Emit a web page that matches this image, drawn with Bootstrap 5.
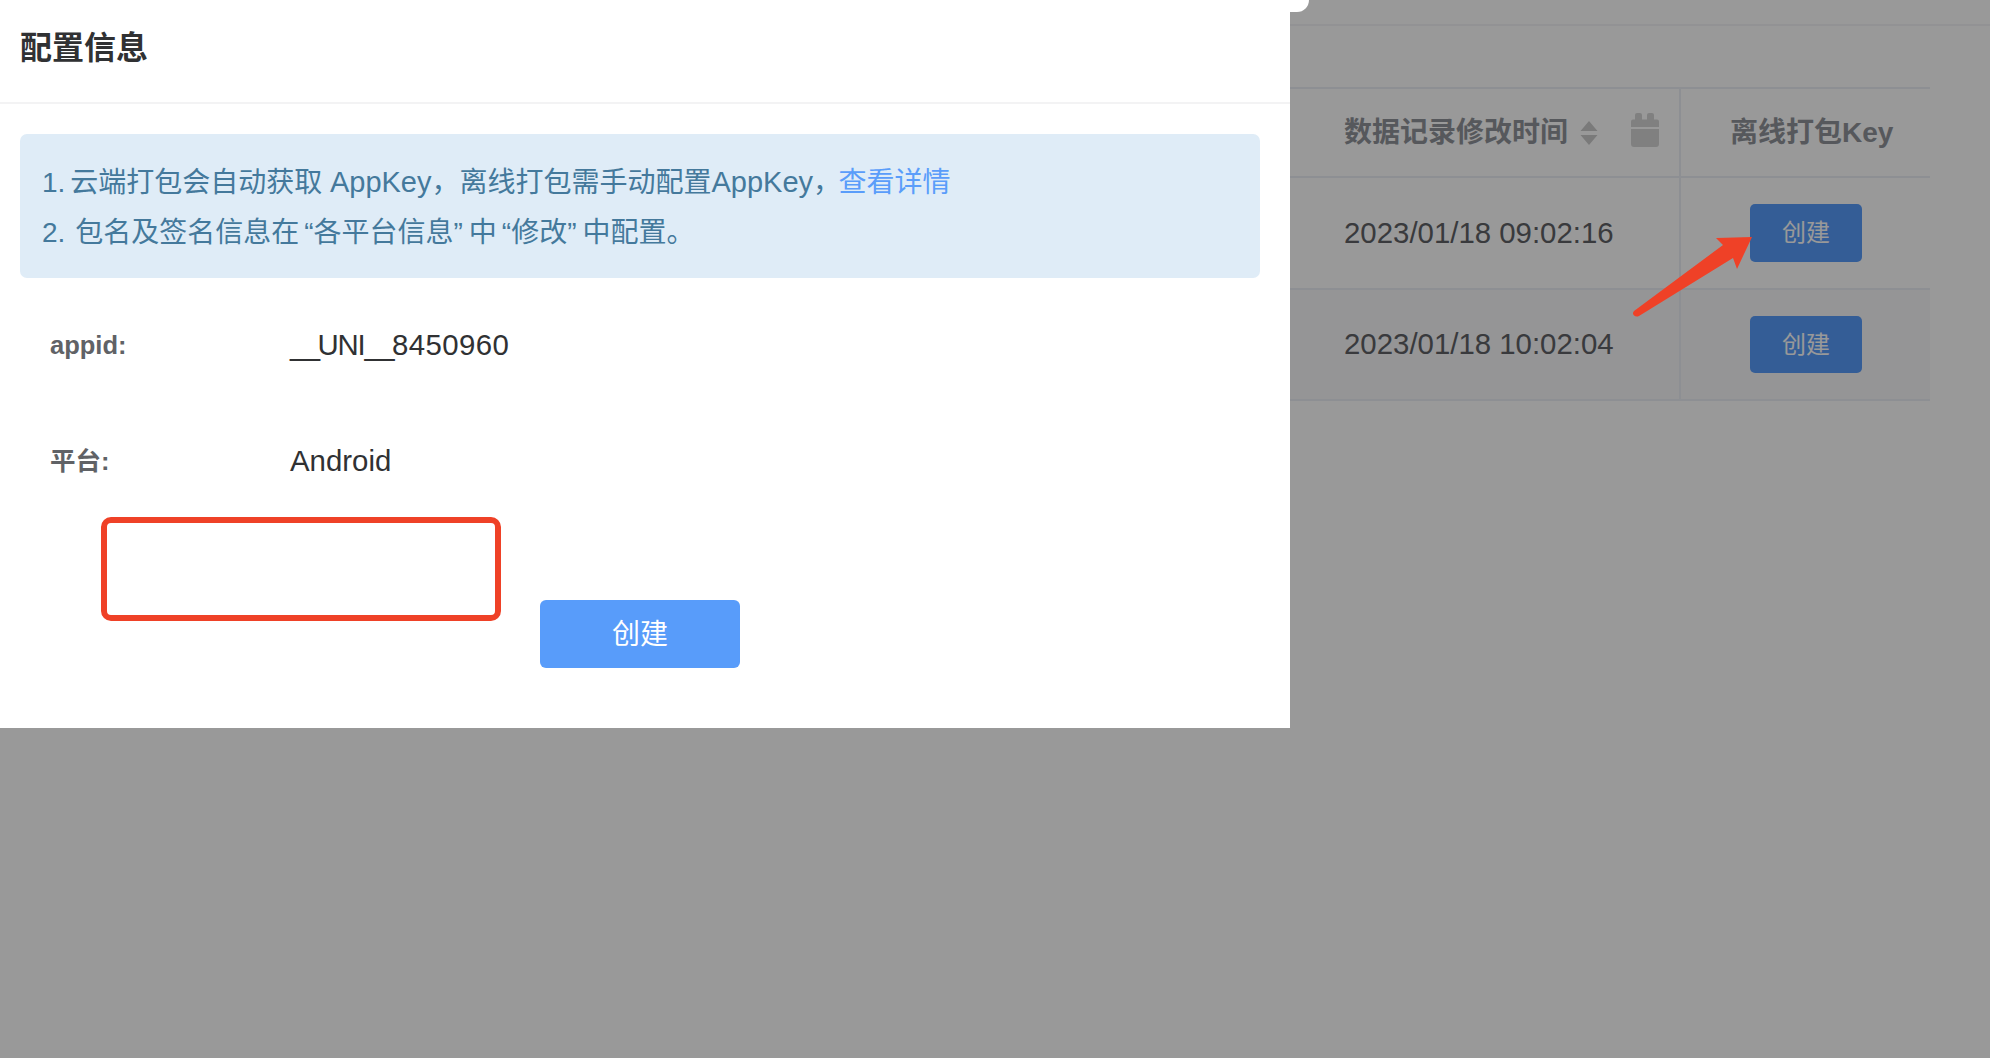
<!DOCTYPE html>
<html lang="zh-CN">
<head>
<meta charset="utf-8">
<title>配置信息</title>
<link href="https://cdn.jsdelivr.net/npm/bootstrap@5.3.0/dist/css/bootstrap.min.css" rel="stylesheet">
<style>
html, body { height: 100%; overflow: hidden; }
body { background: #fff; font-family: "Liberation Sans", "Noto Sans CJK SC", sans-serif; font-size: 28px; color: #606266; }
.page-strip { height: 26px; border-bottom: 2px solid #f3f4f7; }
.page-area { padding: 61px 60px 0 0; }
.data-table { width: 640px; table-layout: fixed; margin: 0; border-top: 2px solid #ebeef5; --bs-table-bg: transparent; }
.data-table th, .data-table td { border-bottom: 2px solid #ebeef5; padding: 0; vertical-align: middle; color: #606266; }
.data-table th { height: 89px; font-weight: 700; color: #909399; }
.data-table td { height: 112px; }
.data-table tbody tr:nth-child(2) { background: #f8f8fa; }
.data-table tbody tr:nth-child(2) td { height: 111px; }
.data-table tbody tr:nth-child(2) .make-btn { height: 57px; }
.col-time { width: 390px; padding-left: 54px !important; border-right: 2px solid #ebeef5; }
.col-key { width: 250px; }
.time-text { font-size: 29.4px; }
.head-time { gap: 12px; }
.cal-mark { margin-left: 21px; margin-top: -6px; }
.key-head { padding-left: 49px; }
.key-cell { padding-left: 69px !important; }
.make-btn { width: 112px; height: 58px; padding: 0; font-size: 24px; background: #589cfb; border: 0; border-radius: 5px; color: #fff; }
.modal-backdrop.dim-layer { --bs-backdrop-opacity: .4; }
.top-lip { position: fixed; top: 0; left: 0; width: 1309px; height: 12px; background: #fff; border-bottom-right-radius: 12px; z-index: 1060; }
.sheet { position: fixed; top: 0; left: 0; width: 1290px; height: 728px; z-index: 1061; border: 0; border-radius: 0; background: #fff; }
.sheet-head { height: 104px; padding: 0 20px; border-bottom: 2px solid #f3f3f4; border-radius: 0; }
.sheet-title { font-size: 32px; font-weight: 700; color: #303133; line-height: 1; margin: -6px 0 0; }
.sheet-body { padding: 30px 30px 0 20px; flex: none; }
.note-box { height: 144px; margin: 0; padding: 22.500px 22px 0; background: #dfecf7; border: 0; border-radius: 7px; color: #44799c; font-size: 28px; line-height: 50px; }
.note-link { color: #5a9dfa; text-decoration: none; margin-left: -2.500px; }
.wide-run { font-size: 29px; }
.num-one { margin-right: -3px; }
.num-two { margin-right: 2px; }
.quote-open { margin-left: 5px; }
.quote-close { margin-right: 6px; }
.info-line { margin-left: 30px; height: 36px; line-height: 36px; }
.first-line { margin-top: 49px; }
.next-line { margin-top: 80px; }
.info-label { width: 240px; font-size: 25.500px; font-weight: 700; color: #606266; }
.info-value { color: #303133; font-size: 29.400px; }
.tight-bars { letter-spacing: -2.600px; }
.tight-caps { letter-spacing: -1.200px; }
.loose-digits { letter-spacing: .4px; }
.confirm-btn { display: block; width: 200px; height: 68px; margin: 121px 0 0 520px; padding: 2px 0 0; background: #589cfa; border: 0; border-radius: 6px; color: #fff; font-size: 28px; }
.mark-box { position: fixed; left: 101px; top: 517px; width: 400px; height: 104px; border: 6px solid #ef4127; border-radius: 10px; z-index: 1062; }
.mark-arrow { position: fixed; left: 0; top: 0; z-index: 1059; pointer-events: none; }
</style>
</head>
<body>
<div class="page-strip"></div>
<div class="page-area d-flex justify-content-end">
  <table class="table data-table">
    <thead>
      <tr>
        <th class="col-time">
          <div class="d-flex align-items-center head-time">
            <span>数据记录修改时间</span>
            <svg width="18" height="24" viewBox="0 0 18 24"><path d="M9 0 17.500 10H.5Z M.5 14H17.500L9 24Z" fill="#cbcbcb"/></svg>
            <svg class="cal-mark" width="28" height="34" viewBox="0 0 28 34"><path d="M4 2a2 2 0 0 1 2-2h3a2 2 0 0 1 2 2v5H4Z M16 2a2 2 0 0 1 2-2h3a2 2 0 0 1 2 2v5h-7Z" fill="#d6d6d6"/><path d="M2 6.500h24a2 2 0 0 1 2 2V14H0V8.500a2 2 0 0 1 2-2Z M0 16H28V31a3 3 0 0 1-3 3H3a3 3 0 0 1-3-3Z" fill="#d6d6d6"/></svg>
          </div>
        </th>
        <th class="col-key"><div class="key-head">离线打包Key</div></th>
      </tr>
    </thead>
    <tbody>
      <tr>
        <td class="col-time"><span class="time-text">2023/01/18 09:02:16</span></td>
        <td class="key-cell"><button type="button" class="btn make-btn">创建</button></td>
      </tr>
      <tr>
        <td class="col-time"><span class="time-text">2023/01/18 10:02:04</span></td>
        <td class="key-cell"><button type="button" class="btn make-btn">创建</button></td>
      </tr>
    </tbody>
  </table>
</div>

<div class="modal-backdrop show dim-layer"></div>
<svg class="mark-arrow" width="1990" height="1058" viewBox="0 0 1990 1058"><path d="M1634 311 1723 245 1716 238 1752 237 1737 269 1733 258 1639 316C1635 318 1631 314 1634 311Z" fill="#ef4127"/></svg>
<div class="top-lip"></div>

<div class="modal-content sheet">
  <div class="modal-header sheet-head">
    <h5 class="modal-title sheet-title">配置信息</h5>
  </div>
  <div class="modal-body sheet-body">
    <div class="alert note-box">
      <div><span class="num-one">1. </span>云端打包会自动获取 <span class="wide-run">AppKey</span>，离线打包需手动配置<span class="wide-run">AppKey</span>，<a class="note-link" href="#">查看详情</a></div>
      <div><span class="num-two">2. </span>包名及签名信息在<span class="quote-open">“</span>各平台信息<span class="quote-close">”</span>中<span class="quote-open">“</span>修改<span class="quote-close">”</span>中配置。</div>
    </div>
    <div class="d-flex info-line first-line"><div class="info-label">appid:</div><div class="info-value"><span class="tight-bars">__</span><span class="tight-caps">UNI</span><span class="tight-bars">__</span><span class="loose-digits">8450960</span></div></div>
    <div class="d-flex info-line next-line"><div class="info-label">平台:</div><div class="info-value">Android</div></div>
    <button type="button" class="btn confirm-btn">创建</button>
  </div>
</div>
<div class="mark-box"></div>
<script src="https://cdn.jsdelivr.net/npm/bootstrap@5.3.0/dist/js/bootstrap.bundle.min.js"></script>
</body>
</html>
